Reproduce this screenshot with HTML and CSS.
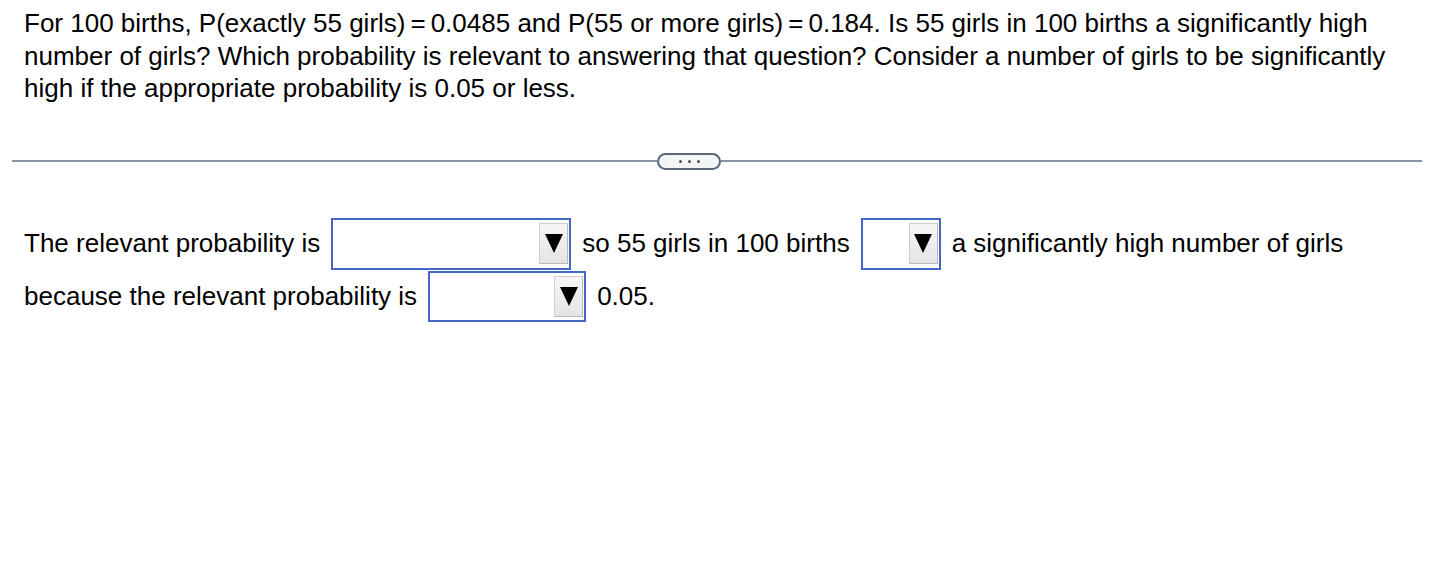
FILE: index.html
```html
<!DOCTYPE html>
<html>
<head>
<meta charset="utf-8">
<link rel="stylesheet" href="styles.css">
</head>
<body>
<div class="question">For 100 births, P(exactly 55 girls)<span class="eq">=</span>0.0485 and P(55 or more girls)<span class="eq">=</span>0.184. Is 55 girls in 100 births a significantly high number of girls? Which probability is relevant to answering that question? Consider a number of girls to be significantly high if the appropriate probability is 0.05 or less.</div>

<div class="divider">
  <div class="rule rule-left"></div>
  <div class="pill"><span class="dot"></span><span class="dot"></span><span class="dot"></span></div>
  <div class="rule rule-right"></div>
</div>

<div class="answers">
  <div class="row row-one">
    <span class="txt">The relevant probability is</span>
    <span class="select select-wide"><span class="btn"><svg width="18" height="19" viewBox="0 0 18 19"><polygon points="0,0 18,0 9,19" fill="#000"/></svg></span></span>
    <span class="txt">so 55 girls in 100 births</span>
    <span class="select select-narrow"><span class="btn"><svg width="18" height="19" viewBox="0 0 18 19"><polygon points="0,0 18,0 9,19" fill="#000"/></svg></span></span>
    <span class="txt">a significantly high number of girls</span>
  </div>
  <div class="row row-two">
    <span class="txt">because the relevant probability is</span>
    <span class="select select-mid"><span class="btn"><svg width="18" height="19" viewBox="0 0 18 19"><polygon points="0,0 18,0 9,19" fill="#000"/></svg></span></span>
    <span class="txt">0.05.</span>
  </div>
</div>
</body>
</html>
```

FILE: styles.css
```css
body {
  margin: 0;
  font-family: "Liberation Sans", Arial, sans-serif;
  color: #000;
  background: #fff;
}

.question {
  padding: 7px 40px 0 24px;
  font-size: 26px;
  line-height: 32.5px;
}

.eq {
  margin: 0 5px;
}

.divider {
  display: flex;
  align-items: center;
  margin: 48px 20px 0 12px;
  height: 17px;
}

.rule {
  height: 2px;
  background: #8a93a3;
}

.rule-left {
  width: 645px;
}

.rule-right {
  flex: 1;
}

.pill {
  width: 60px;
  height: 13px;
  border: 2px solid #5b6778;
  border-radius: 9px;
  background: #f4f5f7;
  display: flex;
  align-items: center;
  justify-content: center;
  gap: 6px;
}

.dot {
  width: 3px;
  height: 3px;
  border-radius: 50%;
  background: #4a4f57;
}

.answers {
  padding: 48px 0 0 24px;
  font-size: 26px;
}

.row {
  display: flex;
  align-items: center;
  gap: 11px;
}

.row-one {
  height: 52px;
}

.row-two {
  margin-top: 1px;
  height: 51px;
}

.select {
  box-sizing: border-box;
  display: flex;
  justify-content: flex-end;
  align-items: center;
  border: 2px solid #4466c4;
  background: #fff;
  padding-right: 1px;
}

.select-wide {
  width: 240px;
  height: 52px;
}

.select-narrow {
  width: 80px;
  height: 52px;
}

.select-mid {
  width: 158px;
  height: 51px;
}

.btn {
  box-sizing: border-box;
  width: 29px;
  height: 41px;
  display: flex;
  align-items: center;
  justify-content: center;
  background: linear-gradient(#f6f6f6, #e4e4e4);
  border: 1px solid #cfcfcf;
  border-right-color: #b9b9b9;
  border-bottom-color: #b9b9b9;
}
```
